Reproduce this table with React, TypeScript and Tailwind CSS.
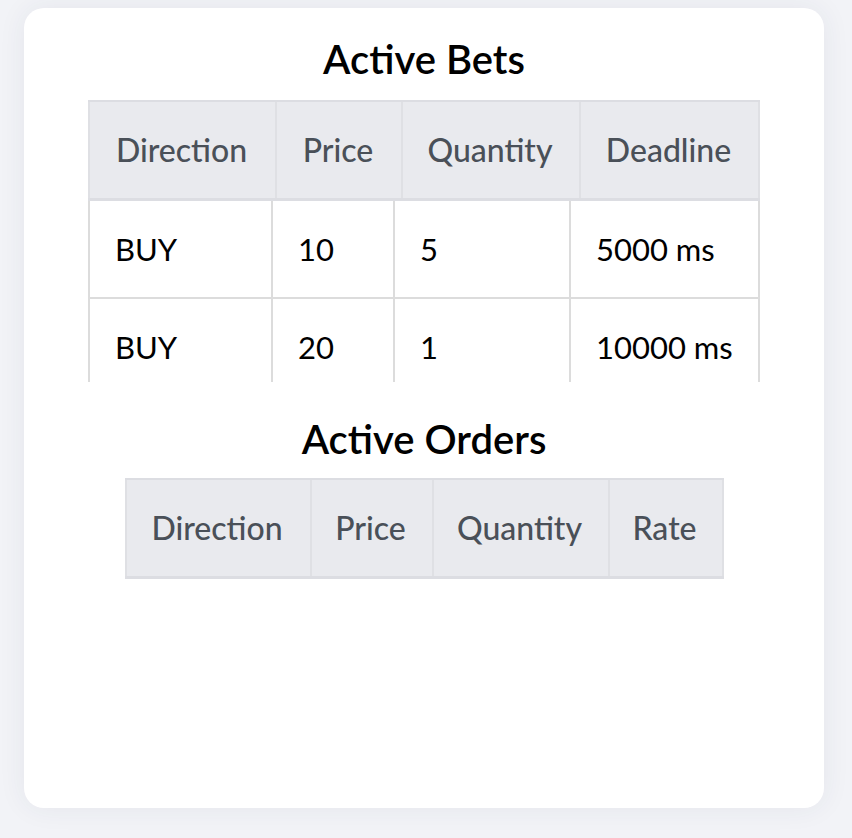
const bets = [
  { direction: "BUY", price: 10, quantity: 5, deadline: 5000 },
  { direction: "BUY", price: 20, quantity: 1, deadline: 10000 },
];

const betHead = [
  { label: "Direction", w: "w-[187px]" },
  { label: "Price", w: "w-[126px]" },
  { label: "Quantity", w: "w-[178px]" },
  { label: "Deadline", w: "w-[181px] border-r-2" },
];

const betBody = ["w-[183px]", "w-[122px]", "w-[176px]", "w-[191px] border-r-2"];

const orderHead = [
  { label: "Direction", w: "w-[185px]" },
  { label: "Price", w: "w-[122px]" },
  { label: "Quantity", w: "w-[176px]" },
  { label: "Rate", w: "w-[116px] border-r-2" },
];

function HeadRow({ cols }: { cols: { label: string; w: string }[] }) {
  return (
    <div className="flex h-[101px] border-t-2 border-b-[3px] border-[#dcdde2] bg-[#e9eaee]">
      {cols.map((c) => (
        <div
          key={c.label}
          className={`${c.w} flex items-center justify-center border-l-2 border-[#dfe0e4] pr-[2px] text-[32px] font-medium text-[#4a5058]`}
        >
          {c.label}
        </div>
      ))}
    </div>
  );
}

export default function App() {
  return (
    <div className="min-h-screen bg-[#f2f3f7] pt-[8px] pl-[24px] font-['Lato',sans-serif]">
      <div className="flex h-[800px] w-[800px] flex-col items-center rounded-[20px] bg-white pt-[27px] shadow-[0_0_28px_rgba(40,50,90,0.07)]">
        <h2 className="text-[40px] leading-[48px] font-semibold text-black">Active Bets</h2>

        <div className="mt-[17px] w-[672px]">
          <HeadRow cols={betHead} />
          <div className="h-[181px] overflow-hidden">
            {bets.map((b) => (
              <div key={b.deadline} className="flex h-[98px] border-b-2 border-[#dcdcdc] text-[31px] text-black">
                {[b.direction, b.price, b.quantity, `${b.deadline} ms`].map((v, i) => (
                  <div key={i} className={`${betBody[i]} flex items-center border-l-2 border-[#dcdcdc] pl-[25px]`}>
                    {v}
                  </div>
                ))}
              </div>
            ))}
          </div>
        </div>

        <h2 className="mt-[33px] text-[40px] leading-[48px] font-semibold text-black">Active Orders</h2>

        <div className="mt-[15px] w-[599px]">
          <HeadRow cols={orderHead} />
        </div>
      </div>
    </div>
  );
}
